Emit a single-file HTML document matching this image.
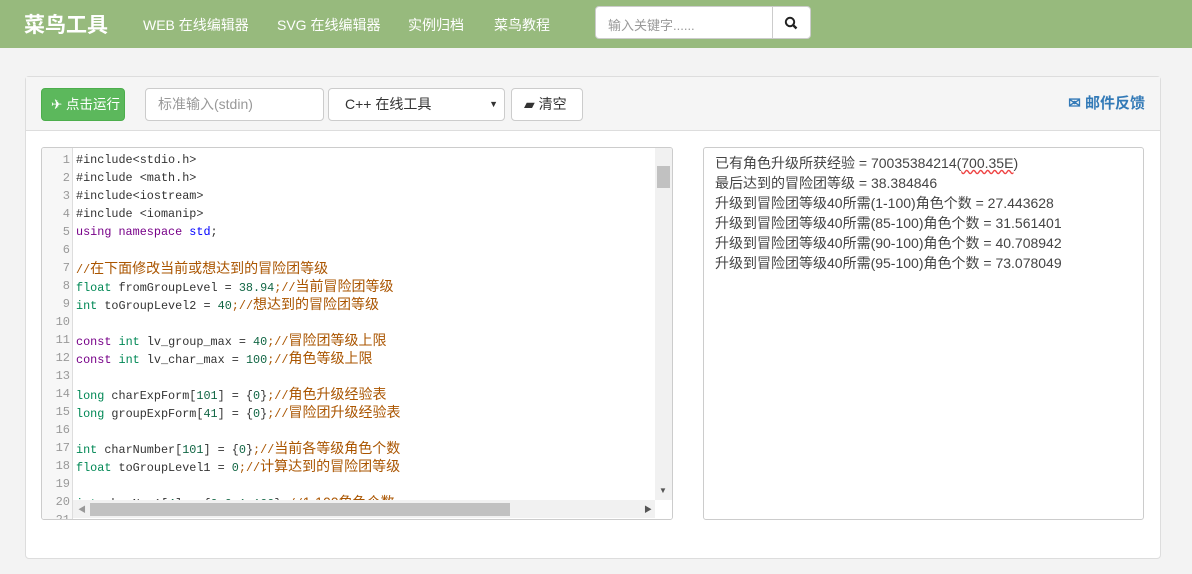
<!DOCTYPE html>
<html><head><meta charset="utf-8"><style>
*{box-sizing:border-box;margin:0;padding:0}
body{width:1192px;height:574px;background:#f3f3f3;font-family:"Liberation Sans","Noto Sans CJK SC",sans-serif;position:relative;overflow:hidden;color:#333}
.nav{position:absolute;left:0;top:0;width:1192px;height:48px;background:#97ba7d}
.logo{position:absolute;left:24px;top:9px;font-size:21px;font-weight:bold;color:#fff}
.nl{position:absolute;top:15px;font-size:14px;color:#fff}
.search{position:absolute;left:595px;top:6px;width:216px;height:33px;background:#fff;border:1px solid #ccc;border-radius:4px}
.search span{position:absolute;left:12px;top:8px;font-size:13px;color:#999}
.search i{position:absolute;left:176px;top:0;width:1px;height:31px;background:#ccc}
.panel{position:absolute;left:25px;top:76px;width:1136px;height:483px;background:#fff;border:1px solid #ddd;border-radius:4px}
.ph{position:absolute;left:0;top:0;width:100%;height:54px;background:#f5f5f5;border-bottom:1px solid #ddd}
.btn{position:absolute;top:11px;height:33px;border-radius:4px;font-size:14px;line-height:31px;white-space:nowrap;overflow:hidden}
.code{position:absolute;left:41px;top:147px;width:632px;height:373px;border:1px solid #ccc;border-radius:3px;overflow:hidden;background:#fff}
.gut{position:absolute;left:0;top:0;width:31px;height:100%;background:#f7f7f7;border-right:1px solid #ddd}
.ln{position:absolute;left:34px;font-family:"Liberation Mono","Noto Sans CJK SC",monospace;font-size:11.8px;white-space:pre;color:#333;height:18px;line-height:18px}
.num{position:absolute;width:28px;text-align:right;left:0;font-family:"Liberation Mono",monospace;font-size:12px;color:#999;line-height:18px}
.c{color:#aa5500}.c b,.h{font-weight:normal;font-size:14px;font-family:"Liberation Sans","Noto Sans CJK SC",sans-serif}
.k{color:#770088}.t{color:#008855}.n{color:#116644}.v{color:#0000ff}
.out{position:absolute;left:703px;top:147px;width:441px;height:373px;border:1px solid #ccc;border-radius:3px;background:#fff;padding:5px 11px;font-size:14px;line-height:20px;color:#444}
</style></head><body>
<div class="nav">
<div class="logo">菜鸟工具</div>
<div class="nl" style="left:143px">WEB 在线编辑器</div>
<div class="nl" style="left:277px">SVG 在线编辑器</div>
<div class="nl" style="left:408px">实例归档</div>
<div class="nl" style="left:494px">菜鸟教程</div>
<div class="search"><span>输入关键字......</span><i></i>
<svg style="position:absolute;left:188px;top:9px" width="14" height="14" viewBox="0 0 14 14"><circle cx="6" cy="6" r="4.2" fill="none" stroke="#222" stroke-width="2"/><path d="M9 9l3.5 3.5" stroke="#222" stroke-width="2.4"/></svg></div>
</div>
<div class="panel"><div class="ph">
<div class="btn" style="left:15px;width:84px;background:#5cb85c;border:1px solid #4cae4c;color:#fff;padding-left:9px;font-size:13.5px">✈ 点击运行</div>
<div class="btn" style="left:119px;width:179px;background:#fff;border:1px solid #ccc;color:#999;padding-left:12px">标准输入(stdin)</div>
<div class="btn" style="left:302px;width:177px;background:#fff;border:1px solid #ccc;color:#333;padding-left:16px">C++ 在线工具<span style="position:absolute;right:6px;font-size:9px">▼</span></div>
<div class="btn" style="left:485px;width:72px;background:#fff;border:1px solid #ccc;color:#333;padding-left:12px">▰ 清空</div>
<div style="position:absolute;right:15px;top:15px;font-size:15px;font-weight:bold;color:#337ab7">✉ 邮件反馈</div>
</div></div>
<div class="code"><div class="gut"></div>
<div style="position:absolute;top:3px;left:0;width:100%">
<div class="num" style="top:0">1</div><div class="ln" style="top:0">#include&lt;stdio.h&gt;</div>
<div class="num" style="top:18px">2</div><div class="ln" style="top:18px">#include &lt;math.h&gt;</div>
<div class="num" style="top:36px">3</div><div class="ln" style="top:36px">#include&lt;iostream&gt;</div>
<div class="num" style="top:54px">4</div><div class="ln" style="top:54px">#include &lt;iomanip&gt;</div>
<div class="num" style="top:72px">5</div><div class="ln" style="top:72px"><span class="k">using namespace</span> <span class="v">std</span>;</div>
<div class="num" style="top:90px">6</div>
<div class="num" style="top:108px">7</div><div class="ln c" style="top:108px">//<b>在下面修改当前或想达到的冒险团等级</b></div>
<div class="num" style="top:126px">8</div><div class="ln" style="top:126px"><span class="t">float</span> fromGroupLevel = <span class="n">38.94</span><span class="c">;//<b>当前冒险团等级</b></span></div>
<div class="num" style="top:144px">9</div><div class="ln" style="top:144px"><span class="t">int</span> toGroupLevel2 = <span class="n">40</span><span class="c">;//<b>想达到的冒险团等级</b></span></div>
<div class="num" style="top:162px">10</div>
<div class="num" style="top:180px">11</div><div class="ln" style="top:180px"><span class="k">const</span> <span class="t">int</span> lv_group_max = <span class="n">40</span><span class="c">;//<b>冒险团等级上限</b></span></div>
<div class="num" style="top:198px">12</div><div class="ln" style="top:198px"><span class="k">const</span> <span class="t">int</span> lv_char_max = <span class="n">100</span><span class="c">;//<b>角色等级上限</b></span></div>
<div class="num" style="top:216px">13</div>
<div class="num" style="top:234px">14</div><div class="ln" style="top:234px"><span class="t">long</span> charExpForm[<span class="n">101</span>] = {<span class="n">0</span>}<span class="c">;//<b>角色升级经验表</b></span></div>
<div class="num" style="top:252px">15</div><div class="ln" style="top:252px"><span class="t">long</span> groupExpForm[<span class="n">41</span>] = {<span class="n">0</span>}<span class="c">;//<b>冒险团升级经验表</b></span></div>
<div class="num" style="top:270px">16</div>
<div class="num" style="top:288px">17</div><div class="ln" style="top:288px"><span class="t">int</span> charNumber[<span class="n">101</span>] = {<span class="n">0</span>}<span class="c">;//<b>当前各等级角色个数</b></span></div>
<div class="num" style="top:306px">18</div><div class="ln" style="top:306px"><span class="t">float</span> toGroupLevel1 = <span class="n">0</span><span class="c">;//<b>计算达到的冒险团等级</b></span></div>
<div class="num" style="top:324px">19</div>
<div class="num" style="top:342px">20</div><div class="ln" style="top:342px"><span class="t">int</span> charNum1[<span class="n">4</span>] = {<span class="n">0</span>,<span class="n">0</span>,<span class="n">1</span>,<span class="n">100</span>}<span class="c">;//<b>1-100角色个数</b></span></div>
<div class="num" style="top:360px">21</div>
</div>
<div style="position:absolute;left:31px;top:352px;width:583px;height:18px;background:#f1f1f1"></div>
<div style="position:absolute;left:48px;top:355px;width:420px;height:13px;background:#c1c1c1"></div>
<div style="position:absolute;left:36px;top:356px;font-size:8px;color:#999">◀</div>
<div style="position:absolute;left:602px;top:356px;font-size:8px;color:#555">▶</div>
<div style="position:absolute;left:613px;top:0;width:17px;height:352px;background:#f1f1f1"></div>
<div style="position:absolute;left:615px;top:18px;width:13px;height:22px;background:#c1c1c1"></div>
<div style="position:absolute;left:617px;top:338px;font-size:8px;color:#555">▼</div>
<div style="position:absolute;left:613px;top:352px;width:17px;height:20px;background:#fff"></div>
</div>
<div class="out">已有角色升级所获经验 = 70035384214(<span style="text-decoration:underline wavy #e44">700.35E</span>)<br>最后达到的冒险团等级 = 38.384846<br>升级到冒险团等级40所需(1-100)角色个数 = 27.443628<br>升级到冒险团等级40所需(85-100)角色个数 = 31.561401<br>升级到冒险团等级40所需(90-100)角色个数 = 40.708942<br>升级到冒险团等级40所需(95-100)角色个数 = 73.078049</div>
</body></html>
